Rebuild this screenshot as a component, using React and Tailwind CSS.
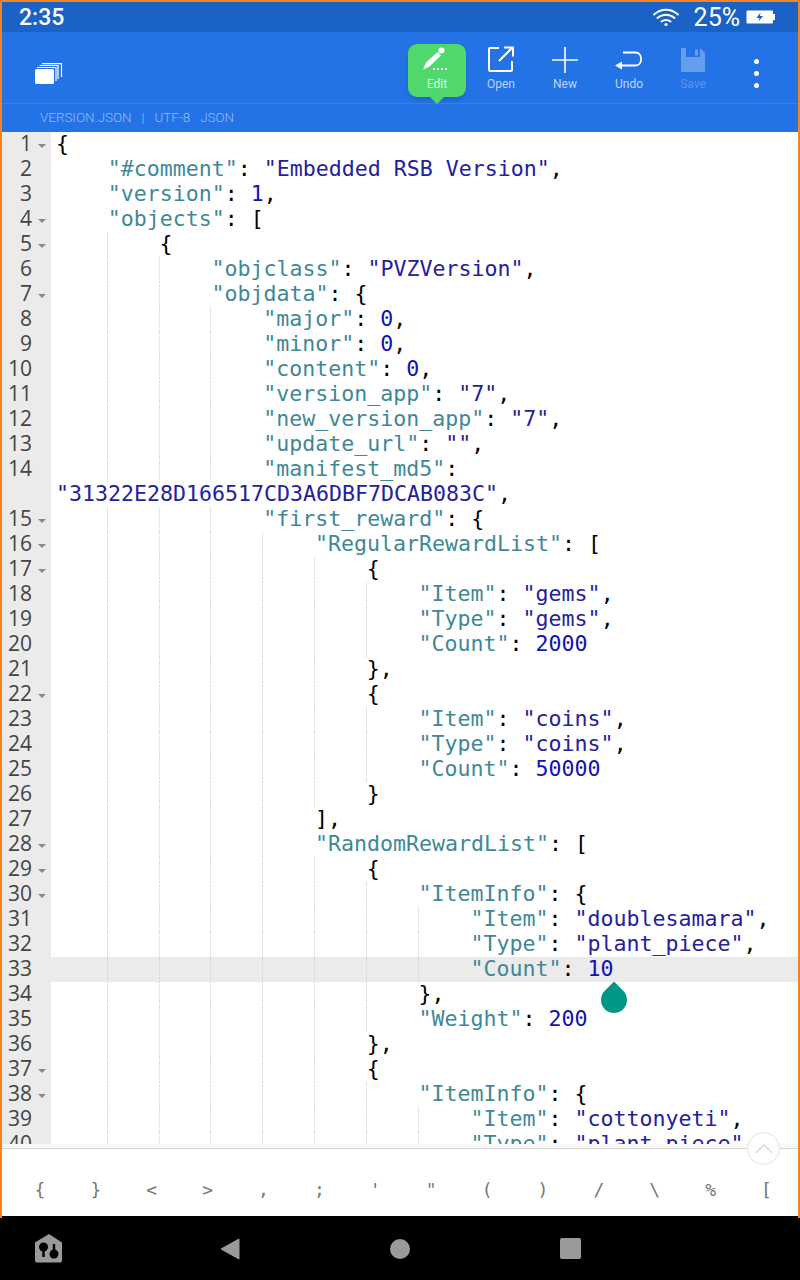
import React from 'react';

const lines = [
  [1, 0, true, '{'],
  [2, 1, false, '"#comment": "Embedded RSB Version",'],
  [3, 1, false, '"version": 1,'],
  [4, 1, true, '"objects": ['],
  [5, 2, true, '{'],
  [6, 3, false, '"objclass": "PVZVersion",'],
  [7, 3, true, '"objdata": {'],
  [8, 4, false, '"major": 0,'],
  [9, 4, false, '"minor": 0,'],
  [10, 4, false, '"content": 0,'],
  [11, 4, false, '"version_app": "7",'],
  [12, 4, false, '"new_version_app": "7",'],
  [13, 4, false, '"update_url": "",'],
  [14, 4, false, '"manifest_md5":'],
  ['', 0, false, '"31322E28D166517CD3A6DBF7DCAB083C",'],
  [15, 4, true, '"first_reward": {'],
  [16, 5, true, '"RegularRewardList": ['],
  [17, 6, true, '{'],
  [18, 7, false, '"Item": "gems",'],
  [19, 7, false, '"Type": "gems",'],
  [20, 7, false, '"Count": 2000'],
  [21, 6, false, '},'],
  [22, 6, true, '{'],
  [23, 7, false, '"Item": "coins",'],
  [24, 7, false, '"Type": "coins",'],
  [25, 7, false, '"Count": 50000'],
  [26, 6, false, '}'],
  [27, 5, false, '],'],
  [28, 5, true, '"RandomRewardList": ['],
  [29, 6, true, '{'],
  [30, 7, true, '"ItemInfo": {'],
  [31, 8, false, '"Item": "doublesamara",'],
  [32, 8, false, '"Type": "plant_piece",'],
  [33, 8, false, '"Count": 10'],
  [34, 7, false, '},'],
  [35, 7, false, '"Weight": 200'],
  [36, 6, false, '},'],
  [37, 6, true, '{'],
  [38, 7, true, '"ItemInfo": {'],
  [39, 8, false, '"Item": "cottonyeti",'],
  [40, 8, false, '"Type": "plant_piece",'],
];

const keys = ['{', '}', '<', '>', ',', ';', "'", '"', '(', ')', '/', '\\', '%', '['];

// splits a json line into coloured pieces
function Code({ text }) {
  const parts = text.match(/"[^"]*"(?=:)|"[^"]*"|\d+|[^"\d]+/g) || [];
  return parts.map((p, i) => {
    let cls = 'text-black';
    if (p[0] === '"') cls = text[text.indexOf(p) + p.length] === ':' ? 'text-[#3f8896]' : 'text-[#25209c]';
    else if (/^\d/.test(p)) cls = 'text-[#1111b4]';
    return <span key={i} className={cls}>{p}</span>;
  });
}

function Row({ num, indent, fold, text }) {
  const active = num === 33;
  return (
    <div className={`flex h-[25px] shrink-0 ${active ? 'bg-[#ebebeb]' : ''}`}>
      <div className="relative w-[49px] shrink-0 bg-[#ebebeb] font-['Open_Sans',sans-serif] text-[21px] leading-[23px] text-[#444]">
        <div className="w-[30px] text-right">{num}</div>
        {fold && <div className="absolute left-[36px] top-[12px] h-0 w-0 border-x-[4px] border-t-[4px] border-x-transparent border-t-[#888]" />}
      </div>
      <div className="flex pl-[4px] font-['DejaVu_Sans_Mono',monospace] text-[21.6px] leading-[23px] whitespace-pre">
        {Array.from({ length: indent }).map((_, i) => (
          <span key={i} className={`h-[25px] w-[51.8px] shrink-0 ${i > 0 ? 'border-l border-dotted border-[#d0d0d0]' : ''}`} />
        ))}
        <span className="pl-[1px]"><Code text={text} /></span>
      </div>
    </div>
  );
}

function ToolButton({ label, children, dim }) {
  return (
    <div className="flex w-[64px] flex-col items-center">
      <svg width="40" height="32" viewBox="0 0 40 32" fill="none" className={dim ? 'opacity-30' : ''}>{children}</svg>
      <span className={`mt-[1px] font-['Roboto',sans-serif] text-[12px] leading-[14px] ${dim ? 'text-white/25' : 'text-white/70'}`}>{label}</span>
    </div>
  );
}

export default function App() {
  return (
    <div className="flex h-[1280px] w-[800px] flex-col overflow-hidden bg-black">
      <div className="flex h-[1216px] shrink-0 flex-col border-x-2 border-t-2 border-[#f5841f] bg-white">
        {/* status bar */}
        <div className="flex h-[30px] shrink-0 items-center bg-[#1a62c6] pl-[17px] pr-[22px] font-['Roboto',sans-serif] text-white">
          <span className="text-[23px] font-medium leading-none">2:35</span>
          <svg width="28" height="20" viewBox="0 0 28 20" fill="none" stroke="white" strokeWidth="2" strokeLinecap="round" className="ml-auto">
            <path d="M2 7.5C9 1 19 1 26 7.5" />
            <path d="M5.5 11C10.5 6.5 17.5 6.5 22.5 11" />
            <path d="M9.5 14.5C12 12.5 16 12.5 18.5 14.5" />
            <circle cx="14" cy="17.5" r="1.6" fill="white" stroke="none" />
          </svg>
          <span className="ml-[14px] text-[25px] leading-none">25%</span>
          <svg width="30" height="14" viewBox="0 0 30 14" className="ml-[6px]">
            <path d="M1.5 0.5H26a1 1 0 0 1 1 1V4h2v6h-2v2.500a1 1 0 0 1-1 1H1.500a1 1 0 0 1-1-1V1.500a1 1 0 0 1 1-1Z" fill="white" />
            <path d="M14.500 2.500L10.500 8H13.500L12.500 11.500L17 6H14Z" fill="#1a62c6" />
          </svg>
        </div>

        {/* toolbar */}
        <div className="relative flex h-[72px] shrink-0 items-start border-b border-[#3c7eea] bg-[#2473e6]">
          <svg width="28" height="22" viewBox="0 0 28 22" className="ml-[33px] mt-[31px] shrink-0">
            <rect x="0" y="6" width="19" height="15" rx="1.500" fill="white" />
            <path d="M2 4.500H21V18M4.500 2.500H23V16M7 0.700H26.500V14" fill="none" stroke="white" strokeWidth="1.200" />
          </svg>
          <div className="ml-auto mr-[11px] flex pt-[12px]">
            <div className="relative flex w-[64px] flex-col items-center">
              <div className="flex h-[53px] w-[58px] flex-col items-center rounded-[9px] bg-[#4fd96c] shadow-md">
                <svg width="40" height="32" viewBox="0 0 40 32" fill="none">
                  <path d="M6 25.500L9 18.500L20.500 8L24 11.500L12.500 22.500Z" fill="white" />
                  <circle cx="24.500" cy="6.500" r="3" fill="white" />
                  <path d="M16 25H30" stroke="white" strokeWidth="2" strokeDasharray="2 2" />
                </svg>
                <span className="mt-[1px] font-['Roboto',sans-serif] text-[12px] leading-[14px] text-white/80">Edit</span>
              </div>
              <div className="-mt-[5px] h-[10px] w-[10px] rotate-45 rounded-[1px] bg-[#4fd96c]" />
            </div>
            <ToolButton label="Open">
              <path d="M18 4H9a1 1 0 0 0-1 1V26a1 1 0 0 0 1 1H30a1 1 0 0 0 1-1V17" stroke="white" strokeWidth="2" />
              <path d="M18 17L31 4M23 3.500H32V12.500" stroke="white" strokeWidth="2" />
            </ToolButton>
            <ToolButton label="New">
              <path d="M20 3V29M7 16H33" stroke="white" strokeWidth="1.600" />
            </ToolButton>
            <ToolButton label="Undo">
              <path d="M14 8.500H26.500C34 8.500 34 21.500 26.500 21.500H11" stroke="white" strokeWidth="1.800" />
              <path d="M6 21.500L13 17.500V25.500Z" fill="white" />
            </ToolButton>
            <ToolButton label="Save" dim>
              <path d="M8 4H27L32 9V28H8Z" fill="white" />
              <rect x="13" y="4" width="14" height="9" fill="#2473e6" />
              <rect x="22" y="5.500" width="3" height="6" fill="white" />
            </ToolButton>
            <div className="flex h-[60px] w-[62px] flex-col items-center justify-center gap-[7px] pb-[2px]">
              <span className="h-[5px] w-[5px] rounded-full bg-white" />
              <span className="h-[5px] w-[5px] rounded-full bg-white" />
              <span className="h-[5px] w-[5px] rounded-full bg-white" />
            </div>
          </div>
        </div>

        {/* file name bar */}
        <div className="flex h-[28px] shrink-0 items-center bg-[#2473e6] pl-[38px] font-['Roboto',sans-serif] text-[13.4px] font-light text-[#95bbf2] whitespace-pre">
          <span>VERSION.JSON</span>
          <span className="ml-[10px]">|</span>
          <span className="ml-[10px]">UTF-8</span>
          <span className="ml-[10px]">JSON</span>
        </div>

        {/* editor */}
        <div className="relative flex h-[1012px] shrink-0 flex-col overflow-hidden bg-white">
          {lines.map((l, i) => (
            <Row key={i} num={l[0]} indent={l[1]} fold={l[2]} text={l[3]} />
          ))}
          <div className="absolute left-[599px] top-[855px] h-[26px] w-[26px] -rotate-45 rounded-[50%_0_50%_50%] bg-[#009688]" />
        </div>

        <div className="h-[4px] shrink-0 bg-[#f8f8f8]" />
        {/* symbol keys */}
        <div className="relative flex flex-1 items-center border-t border-[#d8d8d8] pl-[10px] pt-[14px]">
          {keys.map((k) => (
            <span key={k} className="w-[55.900px] shrink-0 text-center font-['DejaVu_Sans_Mono',monospace] text-[18px] font-light text-[#777]">{k}</span>
          ))}
          <div className="absolute -top-[17px] left-[745px] flex h-[33px] w-[33px] items-center justify-center rounded-full border border-[#e4e4e4] bg-white/90">
            <svg width="18" height="12" viewBox="0 0 18 12" fill="none" stroke="#d8d8d8" strokeWidth="1.300"><path d="M1 10L9 2L17 10" /></svg>
          </div>
        </div>
      </div>

      <div className="flex h-[2px] shrink-0">
        <div className="w-[2px] bg-[#f5841f]" />
        <div className="flex-1 bg-black" />
        <div className="w-[2px] bg-[#f5841f]" />
      </div>

      {/* nav bar */}
      <div className="flex h-[62px] shrink-0 items-center pb-[1px] pl-[35px]">
        <svg width="28" height="29" viewBox="0 0 28 29" className="shrink-0">
          <path d="M14 0L27 8.500V26.500a2 2 0 0 1-2 2H2a2 2 0 0 1-2-2V8.500Z" fill="#9a9a9a" />
          <circle cx="8.500" cy="13" r="4.500" fill="black" />
          <rect x="7.300" y="13" width="2.400" height="10" fill="black" />
          <circle cx="19" cy="20" r="4.500" fill="black" />
          <rect x="17.800" y="10" width="2.400" height="10" fill="black" />
        </svg>
        <svg width="20" height="22" viewBox="0 0 20 22" className="ml-[157px] shrink-0">
          <path d="M19 1V21L1 11Z" fill="#9a9a9a" stroke="#9a9a9a" strokeLinejoin="round" />
        </svg>
        <span className="ml-[150px] h-[20px] w-[20px] shrink-0 rounded-full bg-[#9a9a9a]" />
        <span className="ml-[150px] h-[21px] w-[21px] shrink-0 rounded-[2px] bg-[#9a9a9a]" />
      </div>
    </div>
  );
}
